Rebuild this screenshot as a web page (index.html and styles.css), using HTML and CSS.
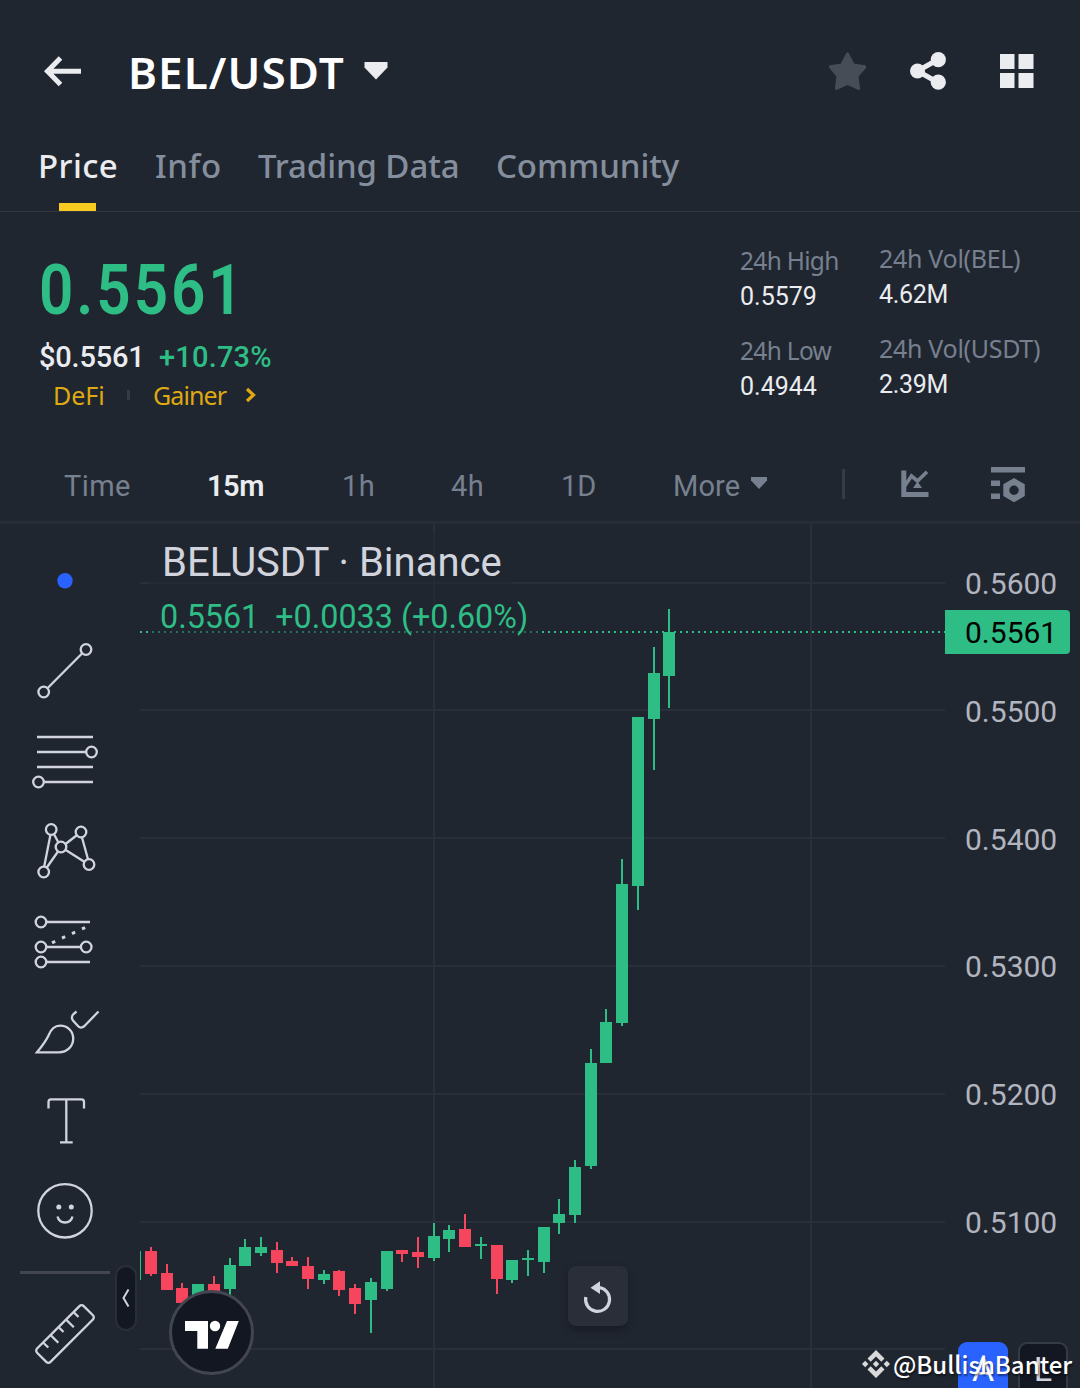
FILE: index.html
```html
<!DOCTYPE html>
<html lang="en">
<head>
<meta charset="utf-8">
<title>BEL/USDT</title>
<link rel="stylesheet" href="styles.css">
</head>
<body>
<div class="app">
  <header class="topbar">
    <svg class="back" viewBox="44 55 38 33"><path d="M81 71.3H48M60.500 58 47.500 71.300 60.500 84.500" fill="none" stroke="#eaecef" stroke-width="5"/></svg>
    <h1 class="pair">BEL/USDT</h1>
    <svg class="pair-caret" viewBox="0 0 24 18"><path d="M.500 0H23.500V5.500L12 17.500 .500 5.500z" fill="#eaecef"/></svg>
    <div class="actions">
      <svg width="38" height="40" viewBox="828 52 38 40"><path d="M847.500 55 853.300 66 865 67.800 857 77 858.500 89.500 847.500 84.500 836.500 89.500 838 77 830.300 67.800 841.800 66z" fill="#474d57" stroke="#474d57" stroke-width="3" stroke-linejoin="round"/></svg>
      <svg width="38" height="40" viewBox="909 51 38 40"><g fill="#eaecef"><circle cx="917.500" cy="71" r="7.500"/><circle cx="938.300" cy="59.700" r="7.600"/><circle cx="938.300" cy="82.200" r="7.600"/></g><path d="M938 59.500 917.500 71 938 82.500" fill="none" stroke="#eaecef" stroke-width="5"/></svg>
      <svg width="36" height="36" viewBox="0 0 36 36"><path d="M1 1H15.500V16H1zM19.500 1H34.500V16H19.500zM1 20H15.500V35H1zM19.500 20H34.500V35H19.500z" fill="#eaecef"/></svg>
    </div>
  </header>
  <nav class="tabs">
    <span class="tab active">Price</span>
    <span class="tab info">Info</span>
    <span class="tab data">Trading Data</span>
    <span class="tab community">Community</span>
  </nav>
  <section class="summary">
    <div class="quote">
      <div class="last">0.5561</div>
      <div class="fiat"><span class="usd">$0.5561</span><span class="change">+10.73%</span></div>
      <div class="tags">
        <span class="tag-defi">DeFi</span><i class="tag-sep"></i><span class="tag-gainer">Gainer</span>
        <svg class="chev" viewBox="0 0 12 16"><path d="M2 2 8.500 8 2 14" fill="none" stroke="#dea911" stroke-width="3.200"/></svg>
      </div>
    </div>
    <div class="stats left">
      <div class="label">24h High</div><div class="value">0.5579</div>
      <div class="label">24h Low</div><div class="value">0.4944</div>
    </div>
    <div class="stats right">
      <div class="label">24h Vol(BEL)</div><div class="value">4.62M</div>
      <div class="label">24h Vol(USDT)</div><div class="value">2.39M</div>
    </div>
  </section>
  <div class="intervals">
    <span class="iv time">Time</span>
    <span class="iv m15">15m</span>
    <span class="iv h1">1h</span>
    <span class="iv h4">4h</span>
    <span class="iv d1">1D</span>
    <span class="iv more">More</span>
    <svg class="more-caret" viewBox="0 0 16 12"><path d="M0 0H16V3.500L8 12 0 3.500z" fill="#76808f"/></svg>
    <i class="iv-sep"></i>
    <svg class="ind" viewBox="900 469 30 30"><path d="M903.800 470.500V494.500H928.500" fill="none" stroke="#76808f" stroke-width="5"/><path d="M905 485.500 911.500 476 917.500 481 927 471.800" fill="none" stroke="#76808f" stroke-width="3.600"/><path d="M917.500 481.500 922 488H913z" fill="#76808f"/></svg>
    <svg class="cfg" viewBox="990 466 36 37"><path d="M991 467H1025V472.500H991zM991 480.500H1000V486H991zM991 493.500H1000V499H991z" fill="#76808f"/><path fill-rule="evenodd" d="M1014 478 1024.800 484.300V496L1014 502.300 1003.300 496V484.300zM1014 485.500A4.700 4.700 0 1 0 1014 495 4.700 4.700 0 1 0 1014 485.500z" fill="#76808f"/></svg>
  </div>
  <main class="workspace">
    <aside class="tools">
      <svg viewBox="0 536 130 90"><circle cx="65" cy="580.700" r="7.700" fill="#2962ff"/></svg>
      <svg viewBox="0 626 130 90"><path d="M47.700 688 82 653.500"/><circle cx="86" cy="649.500" r="5.300"/><circle cx="43.700" cy="692" r="5.300"/></svg>
      <svg viewBox="0 716 130 90"><path d="M37 737H93M37 752H86M37 767H93M44 782H93"/><circle cx="91.500" cy="752" r="5.300"/><circle cx="38.500" cy="782" r="5.300"/></svg>
      <svg viewBox="0 806 130 90"><path d="M50.400 835 44.200 866.500M54 834.200 58.300 842.300M65.500 844 76.500 835.500M82 837.500 88 859.200M65.700 850 84.300 861.700M58 851.500 46.800 867.500"/><circle cx="51.200" cy="829.500" r="5.300"/><circle cx="81" cy="832" r="5.300"/><circle cx="61" cy="847" r="5.300"/><circle cx="89" cy="864.500" r="5.300"/><circle cx="43.700" cy="872" r="5.300"/></svg>
      <svg viewBox="0 896 130 90"><path d="M46.500 922H90M46.500 947H81M46.500 962H90"/><path d="M52 942.800 88 926.200" stroke-dasharray="3.500 7.500" stroke-width="3"/><circle cx="41" cy="922" r="5.300"/><circle cx="41" cy="947" r="5.300"/><circle cx="86.200" cy="947" r="5.300"/><circle cx="41" cy="962" r="5.300"/></svg>
      <svg viewBox="0 986 130 90"><path d="M37 1052.300C43 1045 46 1041 48.500 1035.500 51 1029 54.500 1025.700 60 1025.700 68 1025.700 73.200 1031.500 73.200 1038.500 73.200 1046.500 67 1052.300 59 1052.300zM76.500 1011.500 73.500 1014Q70.500 1017 73 1020.500L77.500 1025.500Q80.500 1029.300 84.500 1026L98.500 1011.500"/></svg>
      <svg viewBox="0 1076 130 90"><path d="M48.500 1108.500V1102Q48.500 1099.300 51 1099.300H81.500Q84 1099.300 84 1102V1108.500M66.300 1099.300V1142.300M60 1142.300H72.700"/></svg>
      <svg viewBox="0 1166 130 90"><circle cx="65" cy="1210.800" r="26.700"/><circle cx="58.800" cy="1207" r="2.500" class="eye"/><circle cx="71.300" cy="1207" r="2.500" class="eye"/><path d="M57.500 1216.500Q59 1222.500 65 1222.500T72.500 1216.500"/></svg>
      <i class="tools-divider"></i>
      <svg viewBox="0 1289 130 90"><rect x="32" y="1324.500" width="66" height="19" rx="3" transform="rotate(-45 65 1334)"/><path d="M43 1342.500 48.300 1347.500M50.500 1335 58.300 1342.800M58.500 1327 63.500 1332M66 1319.500 73.800 1327.300M73.500 1312 78.500 1317"/></svg>
    </aside>
    <div class="plot">
      <svg class="chart" viewBox="140 524 805 864" shape-rendering="crispEdges">
        <path d="M140 582h805v2H140zM140 709h805v2H140zM140 837h805v2H140zM140 965h805v2H140zM140 1093h805v2H140zM140 1221h805v2H140zM140 1348h805v2H140zM433 524h2v864h-2zM810 524h2v864h-2z" fill="#2a2f39"/>
        <path d="M140 632H945" stroke="#2ebd85" stroke-width="2" stroke-dasharray="2 4"/>
        <g id="candles"></g>
      </svg>
      <div class="legend">
        <div class="symbol">BELUSDT · Binance</div>
        <div class="delta"><span>0.5561</span><span>+0.0033 (+0.60%)</span></div>
      </div>
      <div class="logo"><svg viewBox="184 1320 56 30"><path d="M185 1321H208V1348.700H197.300V1331H185zM227 1321H238.800L227.800 1348.700H215.300z" fill="#fff"/><circle cx="215" cy="1326" r="5.200" fill="#fff"/></svg></div>
      <div class="reset"><svg viewBox="568 1266 60 60"><path d="M585.800 1297A12 12 0 1 0 599.500 1287.500" fill="none" stroke="#d1d4dc" stroke-width="3.200"/><path d="M590.500 1287.800 600 1281.300V1294z" fill="#d1d4dc"/></svg></div>
    </div>
    <div class="axis">
      <span>0.5600</span><span>0.5500</span><span>0.5400</span><span>0.5300</span><span>0.5200</span><span>0.5100</span>
      <b class="last-tag">0.5561</b>
      <div class="modes"><b class="auto">A</b><b class="log">L</b></div>
    </div>
    <div class="collapse"><svg viewBox="0 0 10 20"><path d="M7.500 1.500 2.500 10 7.500 18.500" fill="none" stroke="#d1d4dc" stroke-width="2"/></svg></div>
  </main>
  <div class="credit">
    <svg viewBox="0 0 28 28"><g fill="#d9d9d9"><path d="M14 0 22.500 8.500 19.300 11.700 14 6.400 8.700 11.700 5.500 8.500zM14 28 22.500 19.500 19.300 16.300 14 21.600 8.700 16.300 5.500 19.500zM14 10.800 17.200 14 14 17.200 10.800 14zM3.200 10.800 6.400 14 3.200 17.200 0 14zM24.800 10.800 28 14 24.800 17.200 21.600 14z"/></g></svg>
    <span>@BullishBanter</span>
  </div>
</div>
<script src="chart.js"></script>
</body>
</html>
```
FILE: styles.css
```css
* { box-sizing: border-box; }
body { margin: 0; background: #202630; color: #eaecef; font-family: "Noto Sans", sans-serif; }
svg { display: block; flex: none; }
.app { position: relative; width: 1080px; height: 1388px; overflow: hidden; display: flex; flex-direction: column; }

.topbar { height: 142px; display: flex; align-items: center; padding: 0 45px 0 44px; }
.back { width: 38px; height: 33px; }
.pair { margin: 2px 0 0 46px; width: 236px; font-size: 44px; line-height: 60px; font-weight: 600; letter-spacing: 1.1px; color: #fff; white-space: nowrap; }
.pair-caret { width: 24px; height: 18px; }
.actions { margin-left: auto; display: flex; align-items: center; gap: 43px; }
.actions svg:last-child { margin-left: 9px; }

.tabs { height: 70px; display: flex; align-items: flex-start; padding-left: 38px; border-bottom: 1px solid #2f3640; font-size: 33px; line-height: 48px; font-weight: 500; color: #848e9c; white-space: nowrap; }
.tab { position: relative; flex: none; height: 69px; }
.active { width: 117px; color: #eaecef; letter-spacing: .4px; }
.active::after { content: ""; position: absolute; left: 21px; bottom: 0; width: 37px; height: 8px; background: #f8cb20; }
.info { width: 103px; letter-spacing: .6px; }
.data { width: 238px; letter-spacing: -.1px; }
.community { letter-spacing: -.1px; }

.summary { height: 236px; display: flex; padding-left: 39px; }
.quote { width: 701px; }
.last { margin-top: 37px; height: 82px; font: 600 70px/82px Roboto, sans-serif; letter-spacing: 3.4px; transform: scaleX(.86); transform-origin: left; color: #2ebd85; }
.fiat { margin-top: 9px; display: flex; font: 500 29px/34px Roboto, sans-serif; }
.usd { width: 120px; letter-spacing: -.2px; }
.change { color: #2ebd85; letter-spacing: .2px; }
.tags { display: flex; align-items: center; height: 42px; padding-left: 14px; font-size: 25px; color: #dea911; }
.tag-defi { width: 74px; }
.tag-sep { width: 3px; height: 10px; background: #363c47; margin-right: 23px; }
.tag-gainer { width: 92px; letter-spacing: -.9px; }
.chev { width: 12px; height: 16px; }
.stats { font-size: 25px; line-height: 35px; white-space: nowrap; }
.stats .label { color: #76808f; position: relative; top: -1px; }
.stats .value { font: 400 25px/35px Roboto, sans-serif; margin-bottom: 20px; }
.stats.left { width: 139px; padding-top: 32px; }
.stats.left .label { font-size: 24.500px; letter-spacing: -.7px; }
.stats.right { padding-top: 30px; }
.stats.right .label { letter-spacing: -.3px; }
.stats.right .value { letter-spacing: -.3px; }

.intervals { height: 76px; display: flex; align-items: center; padding: 0 0 3px 64px; border-bottom: 3px solid #272c36; font: 400 29px/34px Roboto, sans-serif; color: #76808f; white-space: nowrap; }
.iv { flex: none; padding-top: 5px; letter-spacing: .4px; }
.time { width: 143px; }
.m15 { width: 135px; font-weight: 600; letter-spacing: -.5px; color: #eaecef; }
.h1 { width: 109px; }
.h4 { width: 110px; }
.d1 { width: 112px; letter-spacing: 0; }
.more { width: 78px; letter-spacing: .1px; }
.more-caret { width: 16px; height: 12px; }
.iv-sep { width: 3px; height: 30px; margin: 1px 0 0 75px; background: #363c47; }
.ind { width: 30px; height: 30px; margin: 2px 0 0 55px; }
.cfg { width: 36px; height: 37px; margin: 2px 0 0 60px; }

.workspace { position: relative; height: 864px; display: flex; }
.tools { width: 140px; padding-top: 12px; }
.tools svg { width: 130px; height: 90px; fill: none; stroke: #d1d4dc; stroke-width: 2.300; }
.tools svg:first-child { stroke: none; }
.tools .eye { fill: #d1d4dc; stroke: none; }
.tools-divider { display: block; width: 90px; height: 3px; margin: 15px 0 15px 20px; background: #434651; }
.plot { position: relative; width: 805px; }
.chart { width: 805px; height: 864px; }
.legend { position: absolute; left: 10px; top: 8px; display: flex; flex-direction: column; align-items: flex-start; font-family: Roboto, sans-serif; white-space: nowrap; }
.symbol { padding: 7px 10px 5px 12px; font-size: 40px; line-height: 48px; color: #d1d4dc; background: rgba(32,38,48,.5); }
.delta { display: flex; gap: 16px; padding: 5px 14px 3px 10px; font-size: 32.300px; line-height: 40px; color: #2ebd85; background: rgba(32,38,48,.5); }
.logo { position: absolute; left: 29px; top: 766px; width: 85px; height: 85px; border: 3px solid #434651; border-radius: 50%; background: #131722; }
.logo svg { width: 56px; height: 30px; margin: 27px 0 0 12px; }
.reset { position: absolute; left: 428px; top: 742px; width: 60px; height: 60px; border-radius: 8px; background: #2a2e39; box-shadow: 0 4px 8px rgba(0,0,0,.3); }
.axis { position: relative; width: 135px; padding: 42px 0 0 20px; font: 400 30px/36px Roboto, sans-serif; color: #b2b5be; }
.axis span { display: block; height: 127.750px; }
.last-tag { position: absolute; left: 0; top: 86px; width: 125px; height: 44px; padding-left: 20px; line-height: 45px; border-radius: 0 4px 4px 0; background: #2ebd85; color: #000; font-weight: 400; }
.modes { position: absolute; left: 13px; top: 818px; display: flex; gap: 10px; }
.modes b { width: 50px; height: 56px; border-radius: 9px; font-size: 34px; line-height: 54px; font-weight: 400; text-align: center; }
.auto { background: #2962ff; color: #fff; }
.log { background: #131722; border: 2px solid #363a45; color: #d1d4dc; }
.modes .log { line-height: 50px; }
.collapse { position: absolute; left: 115px; top: 741px; width: 22px; height: 66px; border: 2px solid #2a2e39; border-radius: 11px; background: #131722; display: flex; align-items: center; justify-content: center; }
.collapse svg { width: 10px; height: 20px; }
.credit { position: absolute; left: 862px; top: 1346px; display: flex; align-items: center; gap: 3px; font: 500 24px/36px "Noto Sans CJK SC", sans-serif; color: #fff; text-shadow: 1px 2px 2px rgba(0,0,0,.5); }
.credit svg { width: 28px; height: 28px; }
```
FILE: chart.js
```javascript
// Each candle: centre x, wick top, body top, body bottom, wick bottom, rising
const candles = [
  [151, 1246, 1250, 1274, 1276, 0], [167, 1263, 1272, 1290, 1290, 0], [182, 1282, 1287, 1303, 1303, 0],
  [198, 1283, 1283, 1303, 1303, 1], [214, 1275, 1283, 1300, 1300, 0], [230, 1257, 1264, 1289, 1295, 1],
  [245, 1238, 1246, 1266, 1266, 1], [261, 1236, 1246, 1253, 1256, 1], [277, 1241, 1249, 1263, 1273, 0],
  [292, 1256, 1260, 1266, 1266, 0], [308, 1256, 1265, 1279, 1289, 0], [324, 1269, 1273, 1280, 1284, 1],
  [339, 1269, 1270, 1290, 1296, 0], [355, 1283, 1287, 1304, 1314, 0], [371, 1277, 1281, 1300, 1333, 1],
  [387, 1250, 1250, 1289, 1291, 1], [402, 1249, 1249, 1254, 1262, 0], [418, 1236, 1251, 1257, 1268, 0],
  [434, 1222, 1235, 1258, 1261, 1], [449, 1224, 1229, 1239, 1252, 1], [465, 1213, 1228, 1247, 1247, 0],
  [481, 1236, 1243, 1246, 1259, 1], [497, 1244, 1244, 1279, 1294, 0], [512, 1259, 1259, 1280, 1283, 1],
  [528, 1249, 1257, 1260, 1276, 1], [544, 1226, 1226, 1262, 1273, 1], [559, 1198, 1213, 1223, 1234, 1],
  [575, 1159, 1166, 1215, 1223, 1], [591, 1048, 1062, 1166, 1169, 1], [606, 1008, 1021, 1063, 1063, 1],
  [622, 858, 883, 1023, 1026, 1], [638, 716, 716, 886, 910, 1], [654, 646, 672, 719, 770, 1],
  [669, 608, 631, 676, 708, 1]
];
// The top pixel row of wicks and bodies is left clear
let marks = '<rect x="140" y="1251" width="1" height="29" fill="#2ebd85"/>';
for (const [x, high, top, bottom, low, up] of candles) {
  const color = up ? '#2ebd85' : '#f6465d';
  marks += `<path fill="${color}" d="M${x - 1} ${high + 1}h2V${low}h-2zM${x - 6} ${top + 1}h12V${bottom}h-12z"/>`;
}
document.getElementById('candles').innerHTML = marks;
```
